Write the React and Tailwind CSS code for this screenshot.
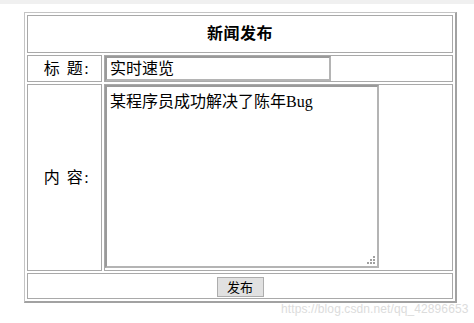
import React from "react";

export default function App() {
  return (
    <div className="relative w-[474px] h-[323px] bg-white overflow-hidden text-black font-['Liberation_Serif','Noto_Sans_CJK_SC',serif]">
      <div className="h-[4px] bg-[#f0f0f0]" />
      <div className="ml-[24px] mt-[8px] w-[433px] border-t border-l border-r-2 border-b-2 border-t-[#c4c4c4] border-l-[#c4c4c4] border-r-[#a2a2a2] border-b-[#a2a2a2] p-[2px] flex flex-col gap-[2px]">
        {/* title */}
        <div className="h-[38px] border border-[#a9a9a9] flex items-center justify-center">
          <span className="text-[16px] font-bold tracking-[0.5px] leading-[20px]">新闻发布</span>
        </div>
        {/* row 2 */}
        <div className="h-[27px] flex gap-[2px]">
          <div className="w-[75px] border border-[#a9a9a9] flex items-center justify-center pl-[5px]">
            <span className="text-[16px] leading-[20px] tracking-[1.5px]">标 题:</span>
          </div>
          <div className="flex-1 border border-[#a9a9a9] flex items-start">
            <div className="w-[226px] h-[25px] border-2 border-[#b4b4b4] border-t-[#9a9a9a] border-l-[#9a9a9a] flex items-center pl-[3px]">
              <span className="text-[16px] leading-[20px]">实时速览</span>
            </div>
          </div>
        </div>
        {/* row 3 */}
        <div className="h-[187px] flex gap-[2px]">
          <div className="w-[75px] border border-[#a9a9a9] flex items-center justify-center pl-[5px]">
            <span className="text-[16px] leading-[20px] tracking-[1.5px]">内 容:</span>
          </div>
          <div className="flex-1 border border-[#a9a9a9] flex items-start">
            <div className="relative w-[274px] h-[183px] border-2 border-[#b4b4b4] border-t-[#9a9a9a] border-l-[#9a9a9a] pl-[3px] pt-[3px]">
              <span className="text-[16px] leading-[20px]">某程序员成功解决了陈年Bug</span>
              <svg className="absolute right-[1px] bottom-[1px]" width="10" height="10" viewBox="0 0 10 10">
                <rect x="7" y="1" width="2" height="2" fill="#a0a0a0" />
                <rect x="4" y="4" width="2" height="2" fill="#a0a0a0" />
                <rect x="7" y="4" width="2" height="2" fill="#a0a0a0" />
                <rect x="1" y="7" width="2" height="2" fill="#a0a0a0" />
                <rect x="4" y="7" width="2" height="2" fill="#a0a0a0" />
                <rect x="7" y="7" width="2" height="2" fill="#a0a0a0" />
              </svg>
            </div>
          </div>
        </div>
        {/* row 4 */}
        <div className="h-[26px] border border-[#a9a9a9] flex justify-center items-start pt-[3px]">
          <div className="w-[47px] h-[20px] bg-[#e1e1e1] border border-[#adadad] flex items-center justify-center">
            <span className="text-[13px] leading-[16px] font-['Noto_Sans_CJK_SC',sans-serif]">发布</span>
          </div>
        </div>
      </div>
      <div className="absolute left-[281px] top-[302px] whitespace-nowrap text-[12px] leading-[14px] tracking-[0.1px] text-[#dcdcdc] font-['Liberation_Sans',sans-serif]">
        https://blog.csdn.net/qq_42896653
      </div>
    </div>
  );
}
